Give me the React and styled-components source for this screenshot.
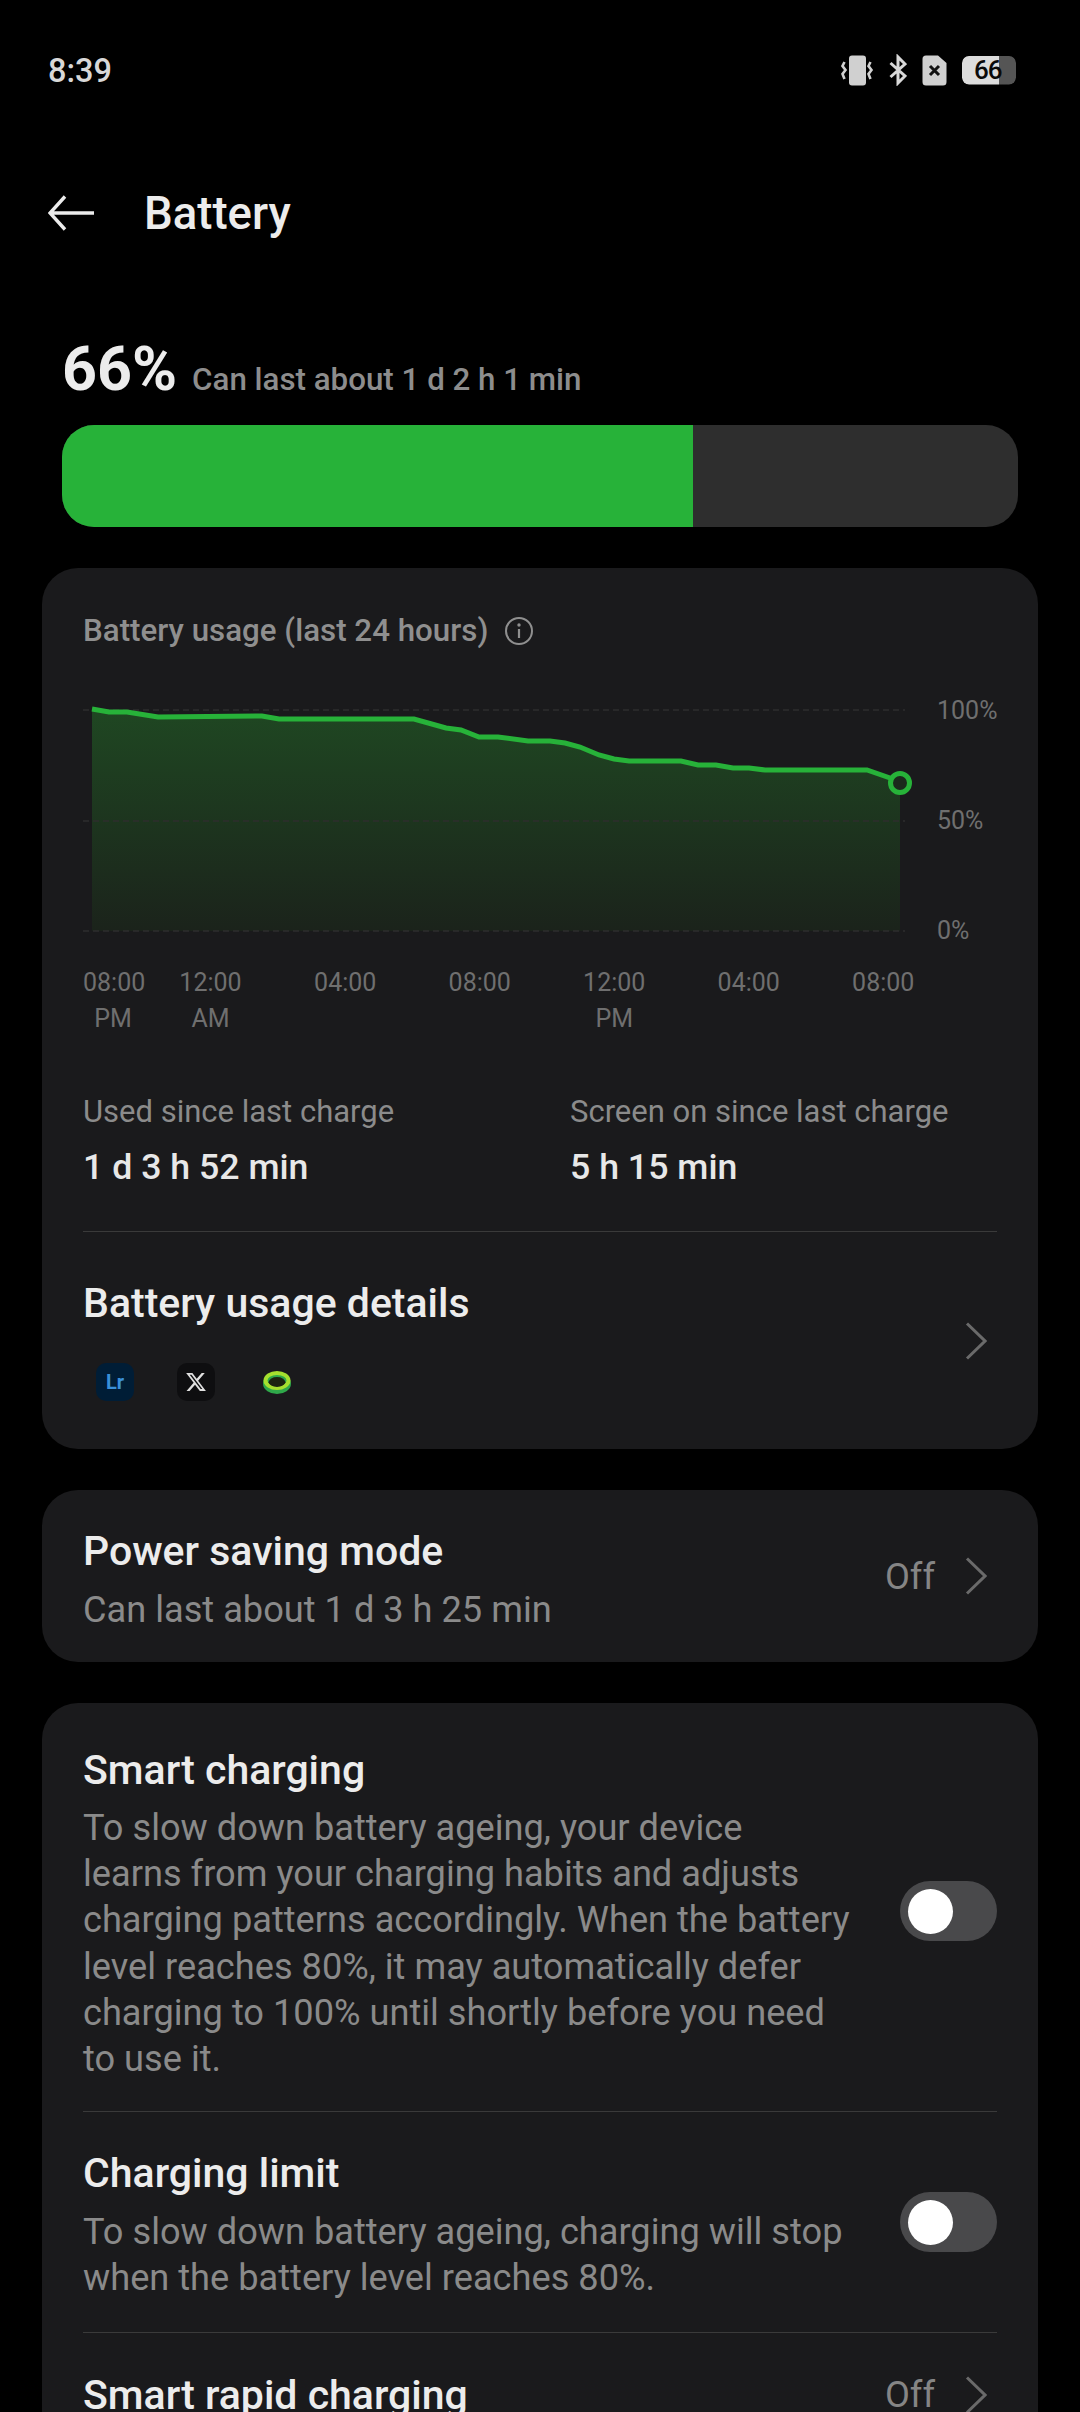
import React from 'react';
import styled, { createGlobalStyle } from 'styled-components';
import { FaXTwitter } from 'react-icons/fa6';

const GlobalStyle = createGlobalStyle`
  html, body {
    margin: 0;
    background: #000;
    height: 2412px;
    overflow: hidden;
  }
  * { box-sizing: border-box; }
`;

const Page = styled.div`
  width: 1080px;
  height: 2412px;
  overflow: hidden;
  background: #000;
  font-family: Roboto, "Noto Sans", sans-serif;
  color: #e8e8e8;
`;
const StatusBar = styled.div`
  height: 140px;
  padding: 0 64px 0 48px;
  display: flex;
  align-items: center;
  justify-content: space-between;
`;
const Clock = styled.div`
  font-size: 32.5px;
  font-weight: 500;
  color: #d8d8d8;
  padding-top: 2px;
`;
const StatusIcons = styled.div`
  display: flex;
  align-items: center;
  gap: 15px;
  svg { display: block; }
`;
const BatteryPill = styled.div`
  position: relative;
  width: 54px;
  height: 29px;
  border-radius: 7px;
  background: linear-gradient(90deg, #dcdcdc 0 37px, #555 37px);
  clip-path: inset(0 0 0 0 round 7px);
  display: flex;
  align-items: center;
  padding-left: 12px;
  font-size: 26px;
  font-weight: 500;
  color: #0a0a0a;
  letter-spacing: -1px;
`;
const AppBar = styled.div`
  height: 100px;
  margin-top: 23px;
  padding-left: 48px;
  display: flex;
  align-items: center;
  gap: 50px;
`;
const Title = styled.h1`
  margin: 0;
  font-size: 45.5px;
  font-weight: 500;
  color: #ececec;
`;
const Summary = styled.div`
  margin-top: 71px;
  padding: 0 62px;
  display: flex;
  align-items: baseline;
  gap: 15px;
  line-height: 70px;
`;
const Percent = styled.span`
  font-size: 61px;
  font-weight: 700;
  color: #ececec;
`;
const SummaryText = styled.span`
  font-size: 31.3px;
  font-weight: 500;
  color: #8d8d8d;
`;
const BatteryBar = styled.div`
  margin: 10px 62px 0;
  height: 102px;
  border-radius: 32px;
  background: #2e2e2e;
  overflow: hidden;
`;
const BatteryFill = styled.div`
  height: 100%;
  background: #27b239;
`;
const Cards = styled.div`
  margin-top: 41px;
  padding: 0 42px;
  display: flex;
  flex-direction: column;
  gap: 41px;
`;
const Card = styled.section`
  background: #1a1a1c;
  border-radius: 36px;
  padding: 0 41px;
`;
const UsageHeading = styled.div`
  padding-top: 43px;
  display: flex;
  align-items: center;
  gap: 16px;
  font-size: 31.3px;
  line-height: 40px;
  font-weight: 500;
  color: #8f8f8f;
  svg { display: block; }
`;
const ChartRow = styled.div`
  margin-top: 40px;
  display: flex;
  justify-content: space-between;
  height: 264px;
  svg { display: block; }
`;
const YAxis = styled.div`
  width: 60px;
  height: 260px;
  display: flex;
  flex-direction: column;
  justify-content: space-between;
  font-size: 25px;
  line-height: 40px;
  color: #6f6f6f;
`;
const XAxis = styled.div`
  margin-top: 10px;
  display: grid;
  grid-template-columns: 60px 135px repeat(5, 134.5px);
  font-size: 25px;
  line-height: 36px;
  color: #6f6f6f;
  height: 72px;
`;
const XTick = styled.div`
  text-align: center;
  white-space: pre-line;
`;
const Stats = styled.div`
  margin-top: 55px;
  display: grid;
  grid-template-columns: 487px 1fr;
  padding-bottom: 44px;
  border-bottom: 1px solid #3a3a3a;
`;
const StatLabel = styled.div`
  font-size: 31px;
  line-height: 40px;
  color: #8b8b8b;
`;
const StatValue = styled.div`
  margin-top: 15px;
  font-size: 35.7px;
  line-height: 40px;
  font-weight: 500;
  color: #e8e8e8;
`;
const Row = styled.div`
  display: flex;
  align-items: center;
  justify-content: space-between;
  gap: 40px;
  min-height: ${p => p.$height || 0}px;
  padding-top: ${p => p.$top || 0}px;
  padding-bottom: ${p => p.$bottom || 0}px;
  border-top: ${p => (p.$divided ? '1px solid #3a3a3a' : 'none')};
`;
const RowBody = styled.div`
  flex: 1;
  min-width: 0;
  padding-top: ${p => p.$shift || 0}px;
`;
const RowTitle = styled.div`
  font-size: 41px;
  line-height: 46px;
  font-weight: 500;
  color: #ececec;
  white-space: nowrap;
`;
const RowText = styled.div`
  margin-top: ${p => p.$gap || 12}px;
  font-size: 36.2px;
  line-height: 46.2px;
  color: #8a8a8a;
  white-space: pre-line;
`;
const AppIcons = styled.div`
  margin-top: 37px;
  padding-left: 13px;
  display: flex;
  align-items: center;
  gap: 43px;
`;
const AppTile = styled.div`
  width: 38px;
  height: 38px;
  border-radius: 10px;
  background: ${p => p.$bg};
  color: ${p => p.$fg};
  font-size: 20px;
  font-weight: 700;
  display: flex;
  align-items: center;
  justify-content: center;
`;
const RowEnd = styled.div`
  flex: none;
  display: flex;
  align-items: center;
  gap: 30px;
  padding-right: 10px;
  font-size: 36.2px;
  color: #858585;
  svg { display: block; }
`;
const Toggle = styled.div`
  flex: none;
  width: 97px;
  height: 60px;
  margin-bottom: 7px;
  border-radius: 30px;
  background: #49494b;
  padding: 8px;
`;
const Knob = styled.div`
  width: 45px;
  height: 45px;
  border-radius: 50%;
  background: #fff;
`;

const CURVE =
  '92,708 109,711 127,711 158,716 262,715 279,718 414,718 446,727 461,729 479,736 498,736 528,740 550,740 565,742 580,746 599,754 614,758 629,760 681,760 698,764 716,764 733,767 749,767 765,769 867,769 890,777 900,782';

const TICKS = ['08:00\nPM', '12:00\nAM', '04:00', '08:00', '12:00\nPM', '04:00', '08:00'];

const SMART_CHARGING_TEXT = `To slow down battery ageing, your device
learns from your charging habits and adjusts
charging patterns accordingly. When the battery
level reaches 80%, it may automatically defer
charging to 100% until shortly before you need
to use it.`;

const CHARGING_LIMIT_TEXT = `To slow down battery ageing, charging will stop
when the battery level reaches 80%.`;

function Chevron() {
  return (
    <svg width="22" height="38" viewBox="0 0 22 38" fill="none">
      <path d="M2 1.5 L20 19 L2 36.5" stroke="#6a6a6a" strokeWidth="3" />
    </svg>
  );
}

function VibrateIcon() {
  return (
    <svg width="33" height="31" viewBox="0 0 33 31" fill="none">
      <rect x="8" y="0.5" width="17" height="30" rx="3" fill="#d0d0d0" />
      <path d="M3.5 7 L1.5 11 L4.5 15 L1.5 19 L3.5 24" stroke="#d0d0d0" strokeWidth="2.6" />
      <path d="M29.5 7 L27.5 11 L30.5 15 L27.5 19 L29.5 24" stroke="#d0d0d0" strokeWidth="2.6" />
    </svg>
  );
}

function BluetoothIcon() {
  return (
    <svg width="18" height="32" viewBox="0 0 18 32" fill="none">
      <path d="M1.5 9 L16 22 L9 29 V3 L16 10 L1.5 23" stroke="#d8d8d8" strokeWidth="3" />
    </svg>
  );
}

function SimIcon() {
  return (
    <svg width="25" height="31" viewBox="0 0 25 31" fill="none">
      <path d="M4 0.5 H16 L24.5 8 V27 a3.5 3.5 0 0 1 -3.5 3.5 H4 a3.5 3.5 0 0 1 -3.5 -3.5 V4 a3.5 3.5 0 0 1 3.5 -3.5 Z" fill="#d0d0d0" />
      <path d="M8 11 L17 20 M17 11 L8 20" stroke="#111" strokeWidth="3" />
    </svg>
  );
}

function InfoIcon() {
  return (
    <svg width="30" height="30" viewBox="0 0 30 30" fill="none">
      <circle cx="15" cy="15" r="13" stroke="#8f8f8f" strokeWidth="2" />
      <circle cx="15" cy="9" r="1.7" fill="#8f8f8f" />
      <path d="M15 13 V22" stroke="#8f8f8f" strokeWidth="2.2" />
    </svg>
  );
}

function BackArrow() {
  return (
    <svg width="46" height="36" viewBox="0 0 46 36" fill="none">
      <path d="M17 1.5 L2 18 L17 34.5 M2 18 H46" stroke="#ececec" strokeWidth="3.4" />
    </svg>
  );
}

function RingIcon() {
  return (
    <svg width="33" height="26" viewBox="-5 -1 33 26" fill="none">
      <ellipse cx="14" cy="13.5" rx="11.5" ry="8" stroke="#2fa84a" strokeWidth="5" />
      <ellipse cx="14" cy="10.5" rx="11.5" ry="7.5" stroke="#a5e02f" strokeWidth="4" />
      <ellipse cx="14" cy="12" rx="8" ry="5" fill="#1c2410" />
    </svg>
  );
}

function UsageChart() {
  return (
    <svg width="830" height="264" viewBox="83 690 830 264" fill="none">
      <defs>
        <linearGradient id="usageFill" x1="0" y1="0" x2="0" y2="1">
          <stop offset="0" stopColor="#1f4722" />
          <stop offset="1" stopColor="#1b231b" />
        </linearGradient>
      </defs>
      <polygon points={`92,930 ${CURVE} 900,930`} fill="url(#usageFill)" />
      <path d="M83 709 H905 M83 820 H905 M83 930 H905" stroke="#2e2e2e" strokeWidth="1.5" strokeDasharray="6 4" />
      <polyline points={CURVE} stroke="#27b239" strokeWidth="5" />
      <circle cx="900" cy="782" r="9.5" fill="#1b2a1c" stroke="#27b239" strokeWidth="5" />
    </svg>
  );
}

export default function App() {
  return (
    <Page>
      <GlobalStyle />
      <StatusBar>
        <Clock>8:39</Clock>
        <StatusIcons>
          <VibrateIcon />
          <BluetoothIcon />
          <SimIcon />
          <BatteryPill>66</BatteryPill>
        </StatusIcons>
      </StatusBar>
      <AppBar>
        <BackArrow />
        <Title>Battery</Title>
      </AppBar>
      <Summary>
        <Percent>66%</Percent>
        <SummaryText>Can last about 1 d 2 h 1 min</SummaryText>
      </Summary>
      <BatteryBar>
        <BatteryFill style={{ width: '66%' }} />
      </BatteryBar>
      <Cards>
        <Card>
          <UsageHeading>
            Battery usage (last 24 hours)
            <InfoIcon />
          </UsageHeading>
          <ChartRow>
            <UsageChart />
            <YAxis>
              <span>100%</span>
              <span>50%</span>
              <span>0%</span>
            </YAxis>
          </ChartRow>
          <XAxis>
            {TICKS.map((tick, i) => (
              <XTick key={i}>{tick}</XTick>
            ))}
          </XAxis>
          <Stats>
            <div>
              <StatLabel>Used since last charge</StatLabel>
              <StatValue>1 d 3 h 52 min</StatValue>
            </div>
            <div>
              <StatLabel>Screen on since last charge</StatLabel>
              <StatValue>5 h 15 min</StatValue>
            </div>
          </Stats>
          <Row $top={48} $bottom={48}>
            <RowBody>
              <RowTitle>Battery usage details</RowTitle>
              <AppIcons>
                <AppTile $bg="#001d36" $fg="#3a8fd8">Lr</AppTile>
                <AppTile $bg="#0e0e10" $fg="#e0e0e0">
                  <FaXTwitter size={22} />
                </AppTile>
                <RingIcon />
              </AppIcons>
            </RowBody>
            <RowEnd>
              <Chevron />
            </RowEnd>
          </Row>
        </Card>
        <Card>
          <Row $height={172}>
            <RowBody $shift={10}>
              <RowTitle>Power saving mode</RowTitle>
              <RowText $gap={13}>Can last about 1 d 3 h 25 min</RowText>
            </RowBody>
            <RowEnd>
              Off
              <Chevron />
            </RowEnd>
          </Row>
        </Card>
        <Card>
          <Row $top={44} $bottom={29}>
            <RowBody>
              <RowTitle>Smart charging</RowTitle>
              <RowText>{SMART_CHARGING_TEXT}</RowText>
            </RowBody>
            <Toggle>
              <Knob />
            </Toggle>
          </Row>
          <Row $divided $top={38} $bottom={30}>
            <RowBody>
              <RowTitle>Charging limit</RowTitle>
              <RowText $gap={13}>{CHARGING_LIMIT_TEXT}</RowText>
            </RowBody>
            <Toggle>
              <Knob />
            </Toggle>
          </Row>
          <Row $divided $top={39} $bottom={30}>
            <RowBody>
              <RowTitle>Smart rapid charging</RowTitle>
            </RowBody>
            <RowEnd>
              Off
              <Chevron />
            </RowEnd>
          </Row>
        </Card>
      </Cards>
    </Page>
  );
}
